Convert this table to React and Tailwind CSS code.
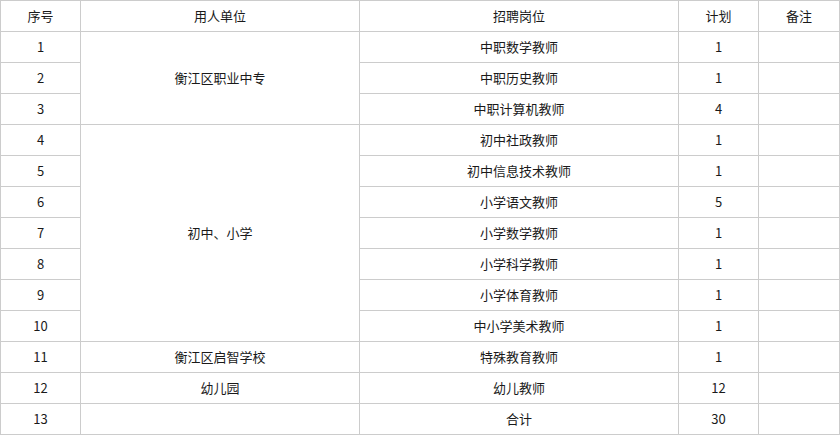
const rows = [
  { no: 1, post: "中职数学教师", plan: "1" },
  { no: 2, post: "中职历史教师", plan: "1" },
  { no: 3, post: "中职计算机教师", plan: "4" },
  { no: 4, post: "初中社政教师", plan: "1" },
  { no: 5, post: "初中信息技术教师", plan: "1" },
  { no: 6, post: "小学语文教师", plan: "5" },
  { no: 7, post: "小学数学教师", plan: "1" },
  { no: 8, post: "小学科学教师", plan: "1" },
  { no: 9, post: "小学体育教师", plan: "1" },
  { no: 10, post: "中小学美术教师", plan: "1" },
  { no: 11, post: "特殊教育教师", plan: "1" },
  { no: 12, post: "幼儿教师", plan: "12" },
  { no: 13, post: "合计", plan: "30" },
]

// units spanning rows: [start row (1-based data row), span, name]
const units = {
  1: { span: 3, name: "衡江区职业中专" },
  4: { span: 7, name: "初中、小学" },
  11: { span: 1, name: "衡江区启智学校" },
  12: { span: 1, name: "幼儿园" },
  13: { span: 1, name: "" },
}

const rowStart = {
  2: "row-start-2", 3: "row-start-3", 4: "row-start-4", 5: "row-start-5",
  6: "row-start-6", 7: "row-start-7", 8: "row-start-8", 9: "row-start-9",
  10: "row-start-10", 11: "row-start-11", 12: "row-start-12", 13: "row-start-13",
  14: "row-start-14",
}
const rowSpan = { 1: "row-span-1", 3: "row-span-3", 7: "row-span-7" }

function Cell({ className = "", children }) {
  return (
    <div className={"bg-white flex items-center justify-center pb-[2px] " + className}>
      {children}
    </div>
  )
}

export default function App() {
  return (
    <div
      className="w-[840px] h-[435px] bg-white text-[13px] text-[#1a1a1a] leading-none"
      style={{ fontFamily: '"Noto Sans CJK SC", "Noto Sans", sans-serif' }}
    >
      <div className="grid grid-cols-[79px_278px_318px_79px_80px] grid-rows-[repeat(14,30px)] gap-px p-px bg-[#cccccc] w-[840px] h-[435px]">
        <Cell className="col-start-1 row-start-1">序号</Cell>
        <Cell className="col-start-2 row-start-1">用人单位</Cell>
        <Cell className="col-start-3 row-start-1">招聘岗位</Cell>
        <Cell className="col-start-4 row-start-1">计划</Cell>
        <Cell className="col-start-5 row-start-1">备注</Cell>

        {rows.map((r) => (
          <Cell key={"n" + r.no} className={"col-start-1 " + rowStart[r.no + 1]}>{r.no}</Cell>
        ))}
        {Object.entries(units).map(([start, u]) => (
          <Cell
            key={"u" + start}
            className={"col-start-2 " + rowStart[Number(start) + 1] + " " + rowSpan[u.span]}
          >
            {u.name}
          </Cell>
        ))}
        {rows.map((r) => (
          <Cell key={"p" + r.no} className={"col-start-3 " + rowStart[r.no + 1]}>{r.post}</Cell>
        ))}
        {rows.map((r) => (
          <Cell key={"c" + r.no} className={"col-start-4 " + rowStart[r.no + 1]}>{r.plan}</Cell>
        ))}
        {rows.map((r) => (
          <Cell key={"b" + r.no} className={"col-start-5 " + rowStart[r.no + 1]}></Cell>
        ))}
      </div>
    </div>
  )
}
